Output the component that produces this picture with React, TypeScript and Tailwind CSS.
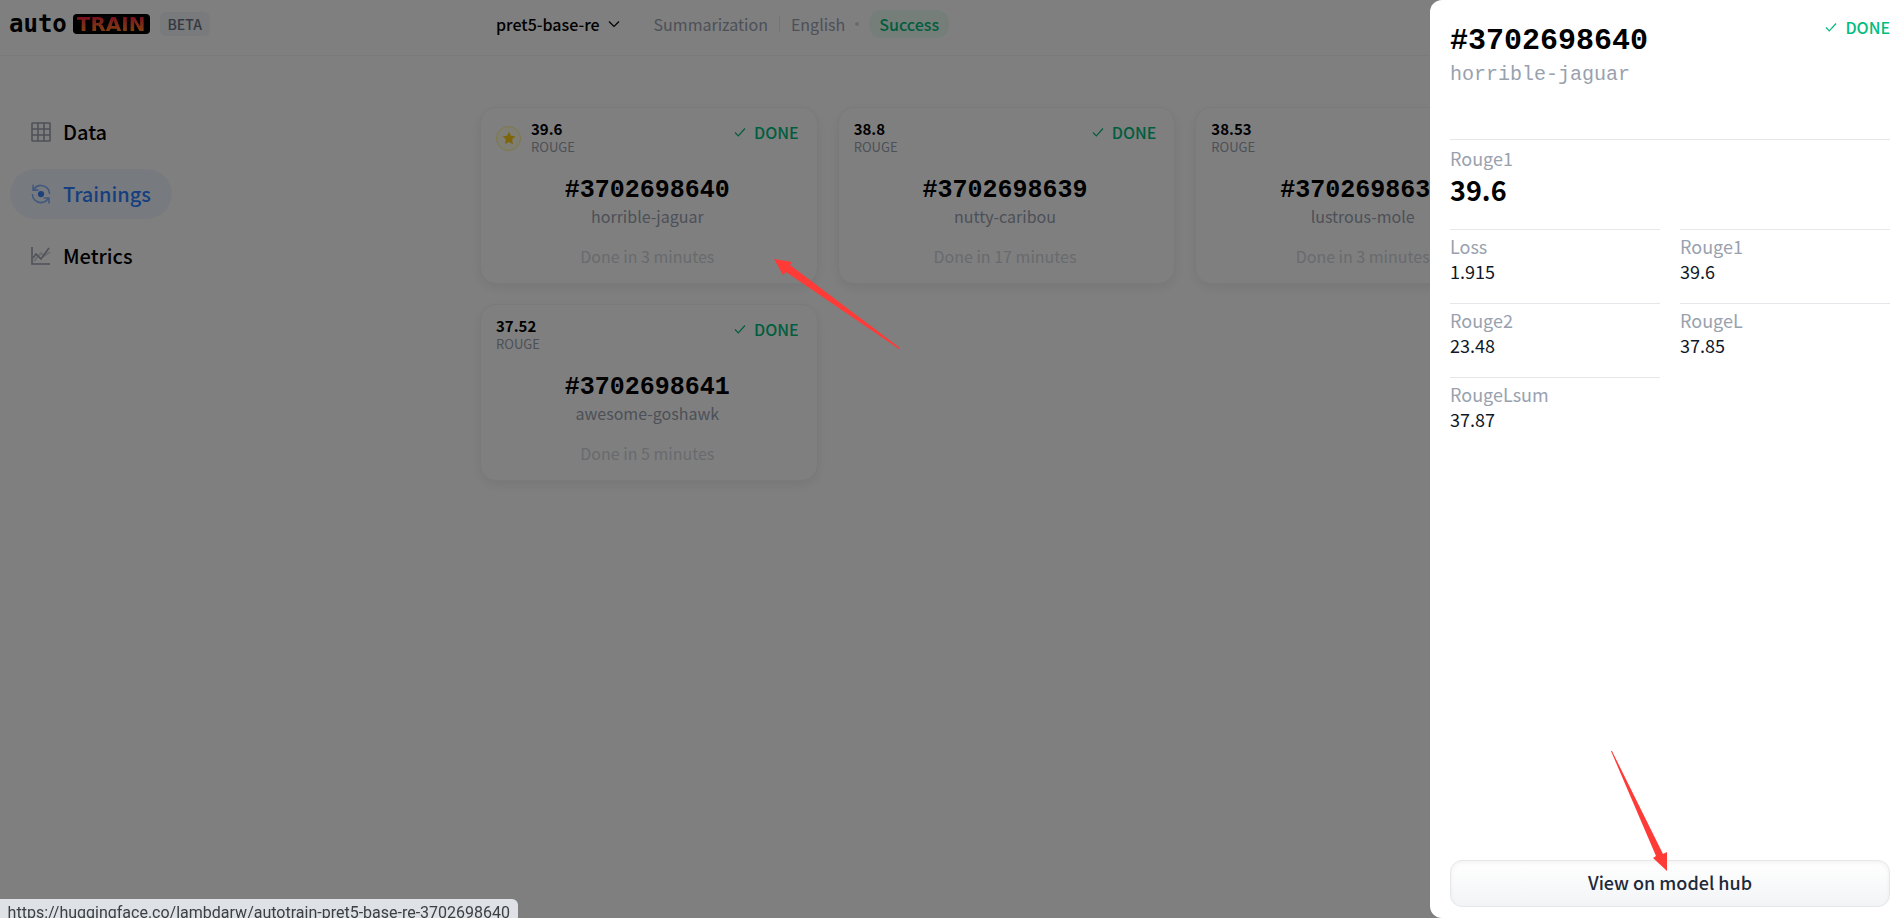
import {ReactNode} from "react";

type Training = {
    id: string;
    name: string;
    score: string;
    time: string;
    best?: boolean;
};

const trainings: Training[] = [
    {id: "#3702698640", name: "horrible-jaguar", score: "39.6", time: "Done in 3 minutes", best: true},
    {id: "#3702698639", name: "nutty-caribou", score: "38.8", time: "Done in 17 minutes"},
    {id: "#3702698638", name: "lustrous-mole", score: "38.53", time: "Done in 3 minutes"},
    {id: "#3702698641", name: "awesome-goshawk", score: "37.52", time: "Done in 5 minutes"},
];

const metrics = [
    {label: "Loss", value: "1.915"},
    {label: "Rouge1", value: "39.6"},
    {label: "Rouge2", value: "23.48"},
    {label: "RougeL", value: "37.85"},
    {label: "RougeLsum", value: "37.87"},
];

const GridIcon = () => (
    <svg width="20" height="20" viewBox="0 0 20 20" fill="none" stroke="#9ca3af" strokeWidth="1.6">
        <rect x="1" y="1" width="18" height="18" rx="0.5"/>
        <path d="M1 7h18M1 13h18M7 1v18M13 1v18"/>
    </svg>
);

const TrainingIcon = () => (
    <svg width="20" height="20" viewBox="0 0 32 32" fill="#3b82f6">
        <circle cx="16" cy="16" r="5"/>
        <g opacity="0.6">
            <path d="M16 1A15 15 0 0 0 4.5 6.3V1H2v10h10V8.5H6.2A12.5 12.5 0 0 1 28.5 16H31A15 15 0 0 0 16 1z"/>
            <path d="M16 31a15 15 0 0 0 11.5-5.3V31H30V21H20v2.5h5.8A12.5 12.5 0 0 1 3.5 16H1a15 15 0 0 0 15 15z"/>
        </g>
    </svg>
);

const MetricsIcon = () => (
    <svg width="20" height="20" viewBox="0 0 20 20" fill="none" stroke="#9ca3af" strokeWidth="1.6">
        <path d="M1 1v17h18"/>
        <path d="M3 15l7-8 3 3 6-4" opacity="0.4" strokeWidth="2"/>
        <path d="M2 12l3-4 5 5 8-11"/>
    </svg>
);

const Done = () => (
    <span className="flex items-center gap-2 text-base leading-6 font-medium text-emerald-500">
        <svg width="12" height="12" viewBox="0 0 12 12" fill="none" stroke="currentColor" strokeWidth="1.2">
            <path d="M1 6.5l3.3 3.3L11 2.5"/>
        </svg>
        DONE
    </span>
);

const NavItem = ({icon, label, active}: {icon: ReactNode; label: string; active?: boolean}) => (
    <a
        href="#"
        className={`flex h-[50px] items-center gap-3 rounded-full px-[21px] text-xl font-medium ${active ? "bg-blue-50 text-blue-500" : "text-black"}`}
    >
        {icon}
        {label}
    </a>
);

const TrainingCard = ({id, name, score, time, best}: Training) => (
    <article className="flex h-[177px] flex-col rounded-2xl border border-gray-100 bg-white pt-3 pr-[18px] pl-[15px] shadow-[0_4px_12px_rgba(0,0,0,0.07)]">
        <div className="flex items-start justify-between">
            <div className="flex items-center gap-[10px]">
                {best && (
                    <span className="flex size-[25px] items-center justify-center rounded-full border border-yellow-200 bg-yellow-50">
                        <svg width="14" height="14" viewBox="0 0 24 24" fill="#facc15">
                            <path d="M12 1l3.4 7.2 7.6 1-5.6 5.4 1.4 7.9L12 18.7l-6.8 3.8 1.4-7.9L1 9.2l7.6-1z"/>
                        </svg>
                    </span>
                )}
                <div>
                    <p className="text-[15px] leading-[18px] font-bold">{score}</p>
                    <p className="text-[13px] leading-[18px] text-gray-400">ROUGE</p>
                </div>
            </div>
            <Done/>
        </div>
        <h3 className="mt-5 text-center font-['Liberation_Mono',monospace] text-[25px] leading-[30px] font-bold">{id}</h3>
        <p className="text-center text-base leading-5 text-gray-400">{name}</p>
        <p className="mt-[18px] text-center text-base leading-6 text-gray-300">{time}</p>
    </article>
);

const Header = () => (
    <header className="flex h-14 items-center border-b border-gray-100 bg-white pb-2">
        <div className="flex w-[496px] items-center gap-[10px] pl-[9px]">
            <a href="#" className="flex items-center gap-[6px] text-black">
                <span className="font-['DejaVu_Sans_Mono',monospace] text-2xl leading-6 font-bold">auto</span>
                <span className="flex h-5 items-center rounded bg-black px-1">
                    <span className="bg-linear-to-b from-rose-600 to-orange-400 bg-clip-text font-['DejaVu_Sans',sans-serif] text-xl leading-5 font-bold text-transparent">TRAIN</span>
                </span>
            </a>
            <span className="rounded-md bg-gray-100 px-2 text-sm leading-6 font-medium text-gray-500">BETA</span>
        </div>
        <button type="button" className="flex items-center gap-2 text-base font-medium">
            pret5-base-re
            <svg width="12" height="12" viewBox="0 0 12 12" fill="none" stroke="currentColor" strokeWidth="1.2">
                <path d="M1 3.5l5 5 5-5"/>
            </svg>
        </button>
        <div className="ml-[34px] flex items-center text-base text-gray-400">
            <span>Summarization</span>
            <span className="mx-[11px] h-4 w-px bg-gray-200"/>
            <span>English</span>
            <span className="mx-[10px] size-1 rounded-full bg-gray-300"/>
            <span className="rounded-xl bg-emerald-50 px-[10px] leading-7 font-medium text-emerald-500">Success</span>
        </div>
    </header>
);

const Drawer = () => (
    <aside className="fixed inset-y-0 right-0 flex w-[464px] flex-col rounded-l-xl bg-white pr-1 pb-[11px] pl-5">
        <div className="flex items-start justify-between pt-[15px]">
            <div className="font-['Liberation_Mono',monospace]">
                <h2 className="pt-[6px] text-[30px] leading-10 font-bold">{trainings[0].id}</h2>
                <p className="text-xl leading-7 text-gray-400">{trainings[0].name}</p>
            </div>
            <Done/>
        </div>
        <dl className="mt-[50px] border-t border-gray-200 pt-1">
            <dt className="text-lg leading-7 text-gray-400">Rouge1</dt>
            <dd className="text-[27px] leading-9 font-bold">39.6</dd>
        </dl>
        <dl className="mt-[21px] grid grid-cols-2 gap-x-5">
            {metrics.map(({label, value}) => (
                <div key={label} className="h-[74px] border-t border-gray-200 pt-1">
                    <dt className="text-lg leading-[25px] text-gray-400">{label}</dt>
                    <dd className="text-lg leading-[25px] text-gray-900">{value}</dd>
                </div>
            ))}
        </dl>
        <a
            href="https://huggingface.co/lambdarw/autotrain-pret5-base-re-3702698640"
            className="mt-auto flex h-[47px] items-center justify-center rounded-xl border border-gray-200 bg-linear-to-b from-white to-gray-100 pb-1 text-lg font-medium text-gray-800 shadow-inner"
        >
            View on model hub
        </a>
    </aside>
);

export default function App() {
    return (
        <div className="relative min-h-screen overflow-hidden bg-white font-['Noto_Sans_CJK_SC',sans-serif] text-black">
            <Header/>
            <div className="flex pt-[51px]">
                <nav className="flex w-[480px] shrink-0 flex-col items-start gap-3 pl-[10px]">
                    <NavItem icon={<GridIcon/>} label="Data"/>
                    <NavItem icon={<TrainingIcon/>} label="Trainings" active/>
                    <NavItem icon={<MetricsIcon/>} label="Metrics"/>
                </nav>
                <main className="grid flex-1 grid-cols-3 gap-5 pr-[361px]">
                    {trainings.map((training) => <TrainingCard key={training.id} {...training}/>)}
                </main>
            </div>
            <div className="fixed inset-0 bg-black/50"/>
            <Drawer/>
            <div className="fixed bottom-0 left-0 flex h-[19px] w-[518px] items-start justify-end overflow-hidden rounded-tr-md bg-[#dee1e6]">
                <p className="pt-1 pr-2 font-['Roboto',sans-serif] text-base leading-5 whitespace-nowrap text-[#3c4043]">
                    https://huggingface.co/lambdarw/autotrain-pret5-base-re-3702698640
                </p>
            </div>
            <svg className="pointer-events-none absolute top-[259px] left-[774px]" width="127" height="92" viewBox="0 0 127 92" fill="#ff3b38">
                <path d="M0 0l18 3-2 3 110 83-1 1L12 13l-3 3z"/>
            </svg>
            <svg className="pointer-events-none fixed right-[226px] bottom-[46px]" width="57" height="121" viewBox="0 0 57 121" fill="#ff3b38">
                <path d="M0 0h1l51 103 4-2v19L42 107l3-2z"/>
            </svg>
        </div>
    );
}
